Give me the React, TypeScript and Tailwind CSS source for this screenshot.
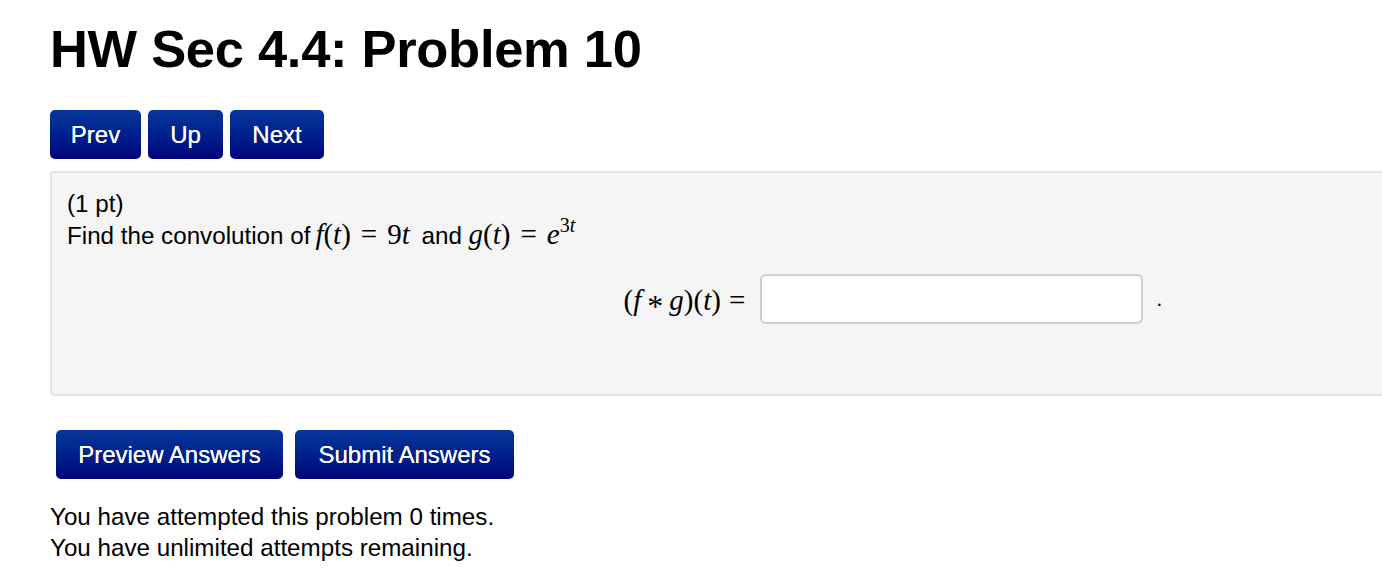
const sans = { fontFamily: '"Liberation Sans", Arial, Helvetica, sans-serif' };

function M({ children, className = "" }: { children: React.ReactNode; className?: string }) {
  return (
    <span className={`font-['Liberation_Serif',_'Times_New_Roman',_serif] text-[29px] leading-none ${className}`}>
      {children}
    </span>
  );
}

// relation sign with TeX-like thick spacing
function Eq() {
  return <span className="mx-[10px]">=</span>;
}

function Btn({ label, className = "" }: { label: string; className?: string }) {
  return (
    <button
      className={`h-[49px] rounded-[5px] bg-gradient-to-b from-[#08369a] to-[#00007f] text-white text-[24px] [text-shadow:0_0_0.6px_#fff] ${className}`}
    >
      {label}
    </button>
  );
}

export default function App() {
  return (
    <div
      className="w-[1382px] h-[568px] overflow-hidden bg-white text-black pl-[50px]"
      style={sans}
    >
      <h1 className="pt-[19px] text-[52.5px] font-bold leading-[60px] tracking-[-0.3px]">
        HW Sec 4.4: Problem 10
      </h1>

      <div className="mt-[31px] flex gap-[7px]">
        <Btn label="Prev" className="w-[91px]" />
        <Btn label="Up" className="w-[75px]" />
        <Btn label="Next" className="w-[94px]" />
      </div>

      <div className="mt-[12px] w-[1686px] h-[225px] rounded-[4px] border-2 border-[#e3e3e3] bg-[#f5f5f5] px-[15px] pt-[15px] text-[24.2px] leading-[32px]">
        <div>(1 pt)</div>
        <div>
          Find the convolution of
          <M className="mr-[5px]">
            <i className="ml-[5px]">f</i>(<i>t</i>)<Eq />9<i>t</i>
          </M>{" "}
          and{" "}
          <M>
            <i>g</i>(<i>t</i>)<Eq />
            <i>e</i>
            <span className="relative -top-[12px] text-[20px]">
              3<i>t</i>
            </span>
          </M>
        </div>
        <div className="mt-[22px] flex items-center justify-center">
          <M>
            (<i>f</i>
            <span className="relative top-[7px] mx-[6px] text-[32px]">*</span>
            <i>g</i>)(<i>t</i>)<span className="ml-[8px]">=</span>
          </M>
          <div className="ml-[15px] w-[383px] h-[50px] rounded-[6px] border-2 border-[#cfcfcf] bg-white" />
          <span className="ml-[13px] text-[22px]">.</span>
        </div>
      </div>

      <div className="mt-[34px] ml-[6px] flex gap-[12px]">
        <Btn label="Preview Answers" className="w-[227px]" />
        <Btn label="Submit Answers" className="w-[219px]" />
      </div>

      <div className="mt-[22px] text-[24.2px] leading-[31px]">
        <div>You have attempted this problem 0 times.</div>
        <div>You have unlimited attempts remaining.</div>
      </div>
    </div>
  );
}
